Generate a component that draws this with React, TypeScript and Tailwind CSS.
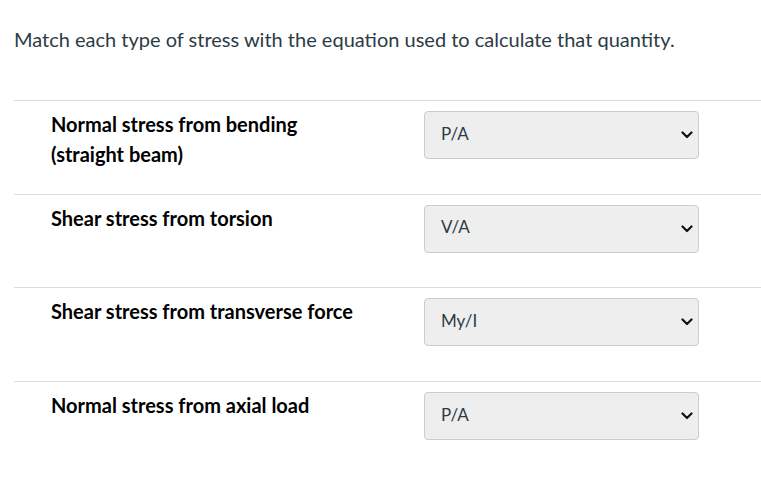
import React from 'react'

interface MatchRow {
  label: string[]
  answer: string
}

const rows: MatchRow[] = [
  { label: ['Normal stress from bending', '(straight beam)'], answer: 'P/A' },
  { label: ['Shear stress from torsion'], answer: 'V/A' },
  { label: ['Shear stress from transverse force'], answer: 'My/I' },
  { label: ['Normal stress from axial load'], answer: 'P/A' },
]

function Chevron() {
  return (
    <svg width="12" height="8" viewBox="0 0 12 8" className="shrink-0">
      <path d="M1.5 1.5 L6 6 L10.5 1.5" fill="none" stroke="#111" strokeWidth="2.2" strokeLinecap="round" strokeLinejoin="round" />
    </svg>
  )
}

export default function App() {
  return (
    <div className="w-[761px] h-[483px] bg-white overflow-hidden font-['Lato','Open_Sans',sans-serif] text-[#2d3b45]">
      <p className="pl-[14px] pt-[26px] text-[20px] leading-[27px]">
        Match each type of stress with the equation used to calculate that quantity.
      </p>

      <div className="ml-[14px] mt-[47px]">
        {rows.map((row, i) => (
          <div key={i} className="border-t border-[#dcdcdc] h-[93.7px] flex items-start pt-[10px]">
            <div className="w-[410px] pl-[37px] -mt-[2px] font-bold text-[20px] leading-[30px] text-black">
              {row.label.map((l, j) => (
                <div key={j}>{l}</div>
              ))}
            </div>
            <div className="w-[275px] h-[48px] rounded-[4px] border border-[#c7cdd1] bg-[#eeeeee] flex items-center justify-between pl-[16px] pr-[5px]">
              <span className="text-[17px] leading-[20px] -mt-[3px] text-[#2d3b45]">{row.answer}</span>
              <Chevron />
            </div>
          </div>
        ))}
      </div>
    </div>
  )
}
